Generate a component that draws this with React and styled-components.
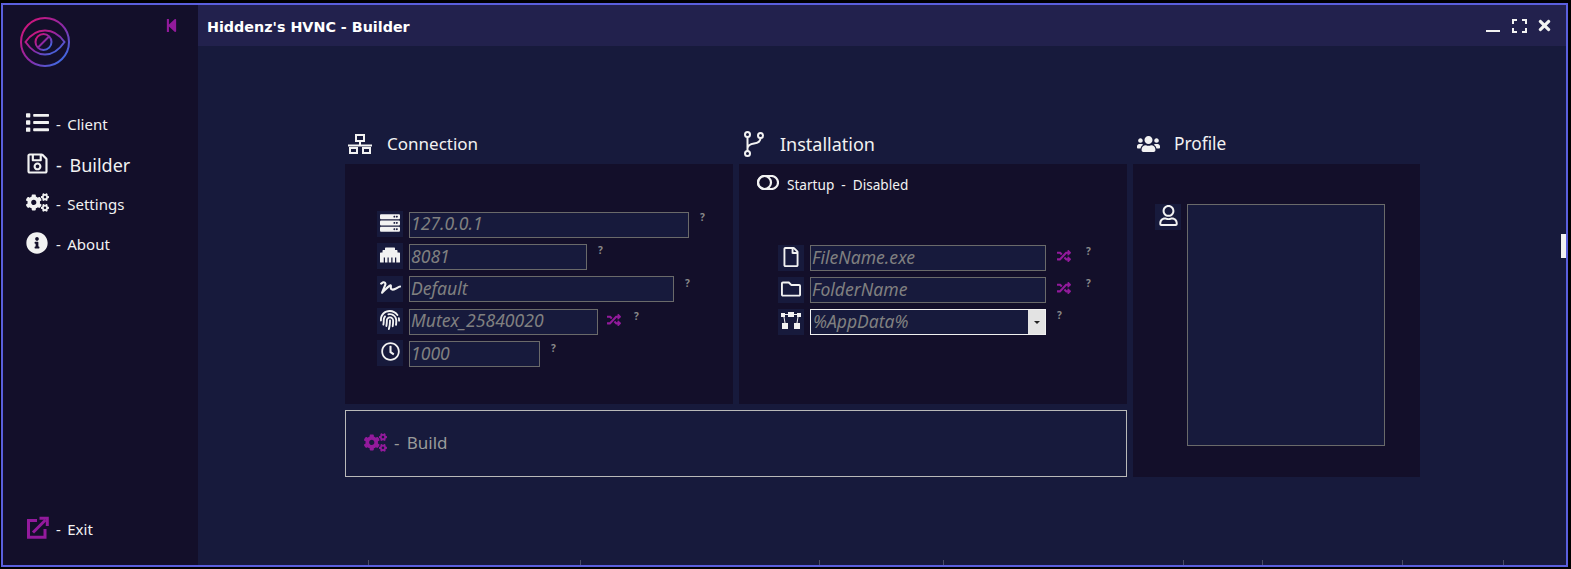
import React from 'react';
import styled, { createGlobalStyle } from 'styled-components';
import {
  FaList, FaRegSave, FaCogs, FaInfoCircle, FaUsers, FaServer, FaEthernet, FaSignature,
  FaFingerprint, FaRegClock, FaRandom, FaRegFile, FaRegFolder, FaRegUser, FaTimes, FaStepBackward,
} from 'react-icons/fa';

const UI_FONT = '"Noto Sans", "Open Sans", sans-serif';
const MAGENTA = '#931a9c';
const PANEL = '#130f2a';
const DEEP = '#171a3c';

const GlobalStyle = createGlobalStyle`
  html, body { margin: 0; padding: 0; background: #000; overflow: hidden; }
  body { font-family: ${UI_FONT}; }
`;

const Shell = styled.div`
  position: relative;
  box-sizing: border-box;
  width: 1567px;
  height: 564px;
  margin: 3px 0 0 1px;
  border: 2px solid #5a5fdd;
  display: flex;
  background: ${DEEP};
  color: #f2f2f2;
  overflow: hidden;
`;

const Sidebar = styled.aside`
  box-sizing: border-box;
  width: 195px;
  flex: none;
  background: ${PANEL};
  display: flex;
  flex-direction: column;
  padding-bottom: 15px;
`;

const LogoRow = styled.div`
  display: flex;
  justify-content: space-between;
  align-items: flex-start;
  padding: 12px 20px 0 17px;
  margin-bottom: 38px;
`;

const Collapse = styled(FaStepBackward)`
  color: ${MAGENTA};
  width: 13px;
  height: 15px;
  margin-top: 1px;
`;

const NavItem = styled.div`
  box-sizing: border-box;
  display: flex;
  align-items: center;
  height: 40px;
  padding-left: 22px;
  padding-bottom: ${(p) => (p.$big ? 0 : 2)}px;
  font-size: ${(p) => (p.$big ? '18px' : '15px')};
`;

const NavIcon = styled.span`
  display: flex;
  justify-content: center;
  align-items: center;
  width: 24px;
  margin-right: 7px;
  margin-bottom: 3px;
  color: ${(p) => p.$color || '#f2f2f2'};
  svg { display: block; }
`;

const Dash = styled.span`
  display: inline-block;
  width: 0.75em;
  text-align: left;
`;

const ExitItem = styled(NavItem)`
  margin-top: auto;
`;

const Main = styled.main`
  flex: 1;
  display: flex;
  flex-direction: column;
  min-width: 0;
`;

const TitleBar = styled.header`
  height: 41px;
  flex: none;
  background: #22214d;
  display: flex;
  align-items: center;
  justify-content: space-between;
  padding: 0 13px 0 9px;
`;

const Title = styled.h1`
  margin: 2px 0 0;
  font-family: "DejaVu Sans", sans-serif;
  font-size: 14.3px;
  font-weight: 700;
  color: #fff;
`;

const WindowButtons = styled.div`
  display: flex;
  align-items: center;
  gap: 12px;
  svg { display: block; color: #f2f2f2; }
`;

const CloseIcon = styled(FaTimes)`
  margin-left: -3px;
`;

const Content = styled.section`
  flex: 1;
  padding: 84px 0 0 147px;
`;

const Board = styled.div`
  display: grid;
  grid-template-columns: 388px 388px 287px;
  grid-template-rows: 28px 240px 67px;
  gap: 6px;
`;

const Heading = styled.div`
  display: flex;
  align-items: center;
  font-size: ${(p) => p.$size}px;
  padding-left: ${(p) => p.$inset}px;
  padding-bottom: 1px;
  color: #f2f2f2;
`;

const HeadingIcon = styled.span`
  display: flex;
  justify-content: center;
  width: ${(p) => p.$w}px;
  margin-right: ${(p) => p.$gap}px;
  svg { display: block; }
`;

const Panel = styled.div`
  box-sizing: border-box;
  background: ${PANEL};
  padding: ${(p) => p.$pad};
`;

const ProfilePanel = styled(Panel)`
  grid-column: 3;
  grid-row: 2 / span 2;
  display: flex;
  align-items: flex-start;
  gap: 6px;
`;

const Fields = styled.div`
  display: flex;
  flex-direction: column;
  gap: ${(p) => p.$gap}px;
  margin-left: ${(p) => p.$left || 0}px;
`;

const Row = styled.div`
  display: flex;
  align-items: flex-start;
  height: 26px;
`;

const IconBox = styled.span`
  box-sizing: border-box;
  width: 26px;
  height: 26px;
  flex: none;
  margin-right: ${(p) => (p.$flush ? 0 : 6)}px;
  padding-bottom: 3px;
  background: ${DEEP};
  display: flex;
  align-items: center;
  justify-content: center;
  color: #f2f2f2;
  svg { display: block; }
`;

const Field = styled.input`
  box-sizing: border-box;
  width: ${(p) => p.$w}px;
  height: 26px;
  flex: none;
  margin: ${(p) => p.$nudge || 0}px 0 0;
  padding: 0 1px 3px;
  background: ${DEEP};
  border: 1px solid #6a6a6a;
  outline: none;
  border-radius: 0;
  font-family: ${UI_FONT};
  font-size: 17.6px;
  font-style: italic;
  color: #808080;
  &::placeholder { color: #808080; opacity: 1; }
`;

const Shuffle = styled(FaRandom)`
  width: 14px;
  height: 14px;
  flex: none;
  margin: ${(p) => p.$top}px 0 0 ${(p) => p.$left}px;
  color: ${MAGENTA};
`;

const Hint = styled.span`
  font-size: 10px;
  font-weight: 700;
  line-height: 12px;
  color: #8a8a8a;
  margin-left: ${(p) => p.$gap}px;
  margin-top: ${(p) => p.$top || 0}px;
`;

const Dropdown = styled.div`
  box-sizing: border-box;
  width: 236px;
  height: 26px;
  flex: none;
  display: flex;
  align-items: center;
  background: ${DEEP};
  border: 1px solid #f0f0f0;
  font-size: 17.5px;
  font-style: italic;
  color: #808080;
`;

const DropdownValue = styled.span`
  flex: 1;
  padding-left: 2px;
  padding-bottom: 3px;
`;

const DropdownArrow = styled.span`
  width: 17px;
  align-self: stretch;
  background: #e3e3e3;
  display: flex;
  align-items: center;
  justify-content: center;
  &::before {
    content: '';
    border-left: 3px solid transparent;
    border-right: 3px solid transparent;
    border-top: 3px solid #222;
  }
`;

const Toggle = styled.div`
  display: flex;
  align-items: center;
  font-size: 13.6px;
  white-space: pre;
  color: #f2f2f2;
  margin-bottom: 51px;
  svg { display: block; margin-right: 8px; margin-top: -4px; }
`;

const BuildButton = styled.button`
  grid-column: 1 / span 2;
  box-sizing: border-box;
  display: flex;
  align-items: center;
  margin: 0;
  padding: 0 0 2px 18px;
  background: transparent;
  border: 1px solid #b9b9b9;
  font-family: ${UI_FONT};
  font-size: 17px;
  color: #9a9a9a;
  svg { display: block; margin-right: 7px; color: ${MAGENTA}; }
`;

const AvatarBox = styled.div`
  box-sizing: border-box;
  width: 198px;
  height: 242px;
  background: ${DEEP};
  border: 1px solid #6a6a6a;
`;

const ScrollGrip = styled.div`
  position: absolute;
  right: 0;
  top: 229px;
  width: 5px;
  height: 24px;
  background: #f2f2f2;
`;

const Tick = styled.span`
  position: absolute;
  bottom: 0;
  width: 1px;
  height: 5px;
  background: #4a4d68;
`;

const TICKS = [368, 580, 819, 943, 1183, 1262, 1402, 1503];

const Logo = () => (
  <svg width="50" height="50" viewBox="0 0 50 50" fill="none">
    <defs>
      <linearGradient id="logoGrad" x1="0.1" y1="0.1" x2="0.9" y2="0.9">
        <stop offset="0" stopColor="#d0147a" />
        <stop offset="0.55" stopColor="#8a2aa8" />
        <stop offset="1" stopColor="#3a6ee6" />
      </linearGradient>
    </defs>
    <g stroke="url(#logoGrad)" strokeWidth="2">
      <circle cx="25" cy="25" r="24" />
      <path d="M5.5 25 C11 17 17 13.5 25 13.5 C33 13.5 39 17 44.5 25 C39 33 33 37.5 25 37.5 C17 37.5 11 33 5.5 25 Z" />
      <circle cx="23.5" cy="25" r="8" />
      <path d="M18 30.5 L29 19.5" />
    </g>
  </svg>
);

const ExitIcon = () => (
  <svg width="23" height="23" viewBox="0 0 23 23" fill="none" stroke="currentColor" strokeWidth="3">
    <path d="M11 4.5H2.5V21.3H19V13" />
    <path d="M7 16.5L19.5 4" />
    <path d="M13.5 2.3H21.3V10" />
  </svg>
);

const LanIcon = () => (
  <svg width="24" height="20" viewBox="0 0 24 20" fill="none" stroke="currentColor" strokeWidth="2">
    <rect x="8" y="1" width="8" height="6" />
    <path d="M12 7V11M0 11.5H24" />
    <rect x="2" y="14" width="7" height="5" />
    <rect x="15" y="14" width="7" height="5" />
  </svg>
);

const BranchIcon = () => (
  <svg width="20" height="26" viewBox="0 0 20 26" fill="none" stroke="currentColor" strokeWidth="2">
    <circle cx="3.5" cy="3.5" r="2.5" />
    <circle cx="3.5" cy="22.5" r="2.5" />
    <circle cx="16.5" cy="4.5" r="2.5" />
    <path d="M3.5 6V20M3.5 17C4 13.5 7 13 10 12.5C14 12 16.5 11 16.5 7" />
  </svg>
);

const ToggleIcon = () => (
  <svg width="22" height="15" viewBox="0 0 22 15" fill="none" stroke="currentColor" strokeWidth="2.2">
    <rect x="1" y="1" width="20" height="13" rx="6.5" />
    <circle cx="7.5" cy="7.5" r="6.5" />
  </svg>
);

const PathIcon = () => (
  <svg width="20" height="18" viewBox="0 0 20 18" fill="currentColor">
    <rect x="7" y="0" width="6" height="5" />
    <rect x="0" y="1" width="4" height="4" />
    <rect x="16" y="1" width="4" height="4" />
    <rect x="1" y="11" width="6" height="6" />
    <rect x="13" y="11" width="6" height="6" />
    <path d="M3 5L4 11M17 5L16 11M4 2.5H7M13 2.5H16" stroke="currentColor" strokeWidth="1" />
  </svg>
);

const FullscreenIcon = () => (
  <svg width="15" height="14" viewBox="0 0 15 14" fill="none" stroke="currentColor" strokeWidth="2">
    <path d="M1 5V1H5M10 1H14V5M14 9V13H10M5 13H1V9" />
  </svg>
);

const MinimizeIcon = () => (
  <svg width="14" height="14" viewBox="0 0 14 14" fill="currentColor">
    <rect x="0" y="11" width="14" height="2" />
  </svg>
);

const App = () => (
  <>
    <GlobalStyle />
    <Shell>
      <Sidebar>
        <LogoRow>
          <Logo />
          <Collapse />
        </LogoRow>
        <NavItem>
          <NavIcon><FaList size={23} /></NavIcon><Dash>-</Dash>Client
        </NavItem>
        <NavItem $big>
          <NavIcon><FaRegSave size={23} /></NavIcon><Dash>-</Dash>Builder
        </NavItem>
        <NavItem>
          <NavIcon><FaCogs size={23} /></NavIcon><Dash>-</Dash>Settings
        </NavItem>
        <NavItem>
          <NavIcon><FaInfoCircle size={22} /></NavIcon><Dash>-</Dash>About
        </NavItem>
        <ExitItem>
          <NavIcon $color={MAGENTA}><ExitIcon /></NavIcon><Dash>-</Dash>Exit
        </ExitItem>
      </Sidebar>
      <Main>
        <TitleBar>
          <Title>Hiddenz's HVNC - Builder</Title>
          <WindowButtons>
            <MinimizeIcon />
            <FullscreenIcon />
            <CloseIcon size={17} />
          </WindowButtons>
        </TitleBar>
        <Content>
          <Board>
            <Heading $inset={3} $size={17}>
              <HeadingIcon $w={24} $gap={15}><LanIcon /></HeadingIcon>Connection
            </Heading>
            <Heading $inset={5} $size={18}>
              <HeadingIcon $w={20} $gap={16}><BranchIcon /></HeadingIcon>Installation
            </Heading>
            <Heading $inset={4} $size={17.3}>
              <HeadingIcon $w={23} $gap={14}><FaUsers size={24} /></HeadingIcon>Profile
            </Heading>
            <Panel $pad="47.2px 0 0 32px">
              <Fields $gap={6.3}>
                <Row>
                  <IconBox><FaServer size={20} /></IconBox>
                  <Field $w={280} $nudge={0.7} placeholder="127.0.0.1" readOnly />
                  <Hint $gap={11}>?</Hint>
                </Row>
                <Row>
                  <IconBox><FaEthernet size={20} /></IconBox>
                  <Field $w={178} $nudge={0.7} placeholder="8081" readOnly />
                  <Hint $gap={11} $top={1}>?</Hint>
                </Row>
                <Row>
                  <IconBox><FaSignature size={21} /></IconBox>
                  <Field $w={265} $nudge={0.7} placeholder="Default" readOnly />
                  <Hint $gap={11} $top={1}>?</Hint>
                </Row>
                <Row>
                  <IconBox><FaFingerprint size={20} /></IconBox>
                  <Field $w={189} $nudge={0.7} placeholder="Mutex_25840020" readOnly />
                  <Shuffle $left={9} $top={5} />
                  <Hint $gap={13} $top={2}>?</Hint>
                </Row>
                <Row>
                  <IconBox><FaRegClock size={19} /></IconBox>
                  <Field $w={131} $nudge={0.7} placeholder="1000" readOnly />
                  <Hint $gap={11} $top={2}>?</Hint>
                </Row>
              </Fields>
            </Panel>
            <Panel $pad="11px 0 0 18px">
              <Toggle><ToggleIcon />{'Startup  -  Disabled'}</Toggle>
              <Fields $gap={6} $left={21}>
                <Row>
                  <IconBox><FaRegFile size={20} /></IconBox>
                  <Field $w={236} placeholder="FileName.exe" readOnly />
                  <Shuffle $left={11} $top={4} />
                  <Hint $gap={15}>?</Hint>
                </Row>
                <Row>
                  <IconBox><FaRegFolder size={20} /></IconBox>
                  <Field $w={236} placeholder="FolderName" readOnly />
                  <Shuffle $left={11} $top={4} />
                  <Hint $gap={15}>?</Hint>
                </Row>
                <Row>
                  <IconBox><PathIcon /></IconBox>
                  <Dropdown>
                    <DropdownValue>%AppData%</DropdownValue>
                    <DropdownArrow />
                  </Dropdown>
                  <Hint $gap={11}>?</Hint>
                </Row>
              </Fields>
            </Panel>
            <ProfilePanel $pad="40px 0 0 22px">
              <IconBox $flush><FaRegUser size={21} /></IconBox>
              <AvatarBox />
            </ProfilePanel>
            <BuildButton><FaCogs size={23} /><Dash>-</Dash>Build</BuildButton>
          </Board>
        </Content>
      </Main>
      <ScrollGrip />
      {TICKS.map((x) => (
        <Tick key={x} style={{ left: x - 3 }} />
      ))}
    </Shell>
  </>
);

export default App;
